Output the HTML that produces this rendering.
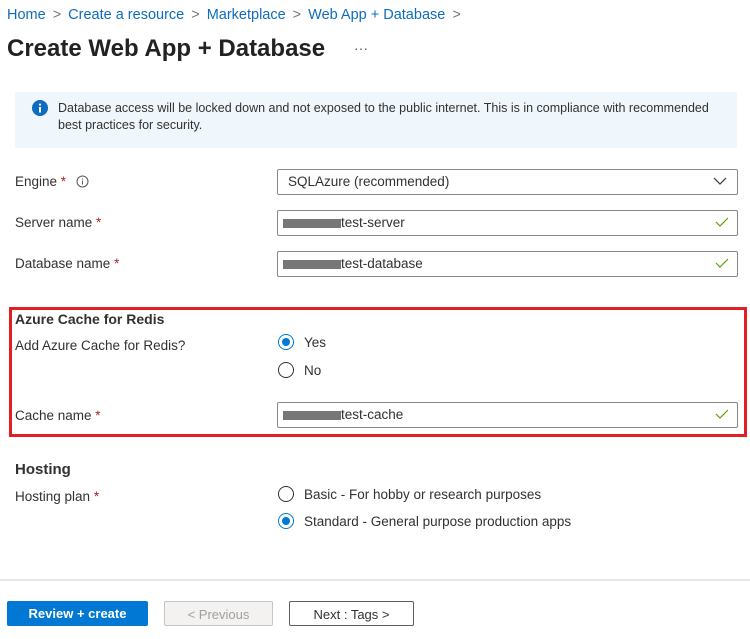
<!DOCTYPE html>
<html><head><style>
body{margin:0;width:750px;height:639px;background:#fff;font-family:"Liberation Sans",sans-serif;color:#323130;position:relative;overflow:hidden}
.a{position:absolute;white-space:nowrap}
.bc{top:7px;left:7px;font-size:14.5px;color:#0f6cbd}
.bc span{color:#777;margin:0 7px}
.title{top:35px;left:7px;font-size:24px;font-weight:bold;color:#222}
.info{left:15px;top:92px;width:722px;height:56px;background:#eff6fc}
.lbl{font-size:13.5px;left:15px;color:#323130}
.req{color:#a4262c}
.box{position:absolute;left:277px;width:459px;height:24px;border:1px solid #8a8886;border-radius:2px;font-size:13.5px;line-height:24px;box-sizing:content-box}
.box .t{position:absolute;left:10px}
.mask{position:absolute;left:5px;top:8px;height:9px;background:#777;width:58px}
.chk{position:absolute;right:8px;top:5px}
.radio{position:absolute;width:16px;height:16px;border:1px solid #323130;border-radius:50%;box-sizing:border-box}
.radio.on{border-color:#0078d4}
.radio.on:after{content:"";position:absolute;left:3px;top:3px;width:8px;height:8px;border-radius:50%;background:#0078d4}
.btn{position:absolute;top:601px;height:25px;font-size:13px;line-height:25px;text-align:center;box-sizing:border-box;border-radius:2px}
</style></head><body>
<div class="a bc">Home<span>&gt;</span>Create a resource<span>&gt;</span>Marketplace<span>&gt;</span>Web App + Database<span>&gt;</span></div>
<div class="a title">Create Web App + Database</div>
<div class="a" style="left:354px;top:40px;font-size:14px;color:#555">···</div>
<div class="a info"></div>
<svg class="a" style="left:32px;top:100px" width="16" height="16"><circle cx="8" cy="8" r="8" fill="#0f6cbd"/><rect x="7" y="7" width="2" height="5.5" fill="#fff"/><circle cx="8" cy="4.6" r="1.1" fill="#fff"/></svg>
<div class="a" style="left:58px;top:100px;font-size:12.5px;line-height:16.5px;color:#323130">Database access will be locked down and not exposed to the public internet. This is in compliance with recommended<br>best practices for security.</div>

<div class="a lbl" style="top:174px">Engine <span class="req">*</span> <svg width="13" height="13" style="vertical-align:-2px;margin-left:6px"><circle cx="6.5" cy="6.5" r="5.5" fill="none" stroke="#555"/><rect x="6" y="5.5" width="1" height="4" fill="#555"/><rect x="6" y="3.5" width="1" height="1" fill="#555"/></svg></div>
<div class="box" style="top:169px"><span class="t">SQLAzure (recommended)</span><svg class="chk" style="top:7px;right:10px" width="14" height="9"><path d="M1 1L7 7L13 1" fill="none" stroke="#333" stroke-width="1.2"/></svg></div>

<div class="a lbl" style="top:215px">Server name <span class="req">*</span></div>
<div class="box" style="top:210px"><div class="mask"></div><span class="t" style="left:63px">test-server</span><svg class="chk" width="14" height="12"><path d="M1 6L5 10L13 2" fill="none" stroke="#57a300" stroke-width="1.2"/></svg></div>

<div class="a lbl" style="top:256px">Database name <span class="req">*</span></div>
<div class="box" style="top:251px"><div class="mask"></div><span class="t" style="left:63px">test-database</span><svg class="chk" width="14" height="12"><path d="M1 6L5 10L13 2" fill="none" stroke="#57a300" stroke-width="1.2"/></svg></div>

<div class="a" style="left:9px;top:307px;width:738px;height:130px;border:3px solid #e31e25;box-sizing:border-box"></div>
<div class="a lbl" style="top:311px;font-weight:bold;font-size:14px">Azure Cache for Redis</div>
<div class="a lbl" style="top:338px">Add Azure Cache for Redis?</div>
<div class="radio on" style="left:278px;top:334px"></div><div class="a" style="left:304px;top:335px;font-size:13.5px">Yes</div>
<div class="radio" style="left:278px;top:362px"></div><div class="a" style="left:304px;top:363px;font-size:13.5px">No</div>
<div class="a lbl" style="top:408px">Cache name <span class="req">*</span></div>
<div class="box" style="top:402px"><div class="mask"></div><span class="t" style="left:63px">test-cache</span><svg class="chk" width="14" height="12"><path d="M1 6L5 10L13 2" fill="none" stroke="#57a300" stroke-width="1.2"/></svg></div>

<div class="a lbl" style="top:461px;font-size:15px;font-weight:bold">Hosting</div>
<div class="a lbl" style="top:489px">Hosting plan <span class="req">*</span></div>
<div class="radio" style="left:278px;top:486px"></div><div class="a" style="left:304px;top:487px;font-size:13.5px">Basic - For hobby or research purposes</div>
<div class="radio on" style="left:278px;top:513px"></div><div class="a" style="left:304px;top:514px;font-size:13.5px">Standard - General purpose production apps</div>

<div class="a" style="left:0;top:579px;width:750px;height:2px;background:#e8e8e8"></div>
<div class="btn" style="left:7px;width:141px;background:#0078d4;color:#fff;font-weight:bold">Review + create</div>
<div class="btn" style="left:164px;width:109px;background:#f3f2f1;border:1px solid #c8c6c4;color:#a19f9d">&lt; Previous</div>
<div class="btn" style="left:289px;width:125px;border:1px solid #605e5c;color:#323130">Next : Tags &gt;</div>
</body></html>
